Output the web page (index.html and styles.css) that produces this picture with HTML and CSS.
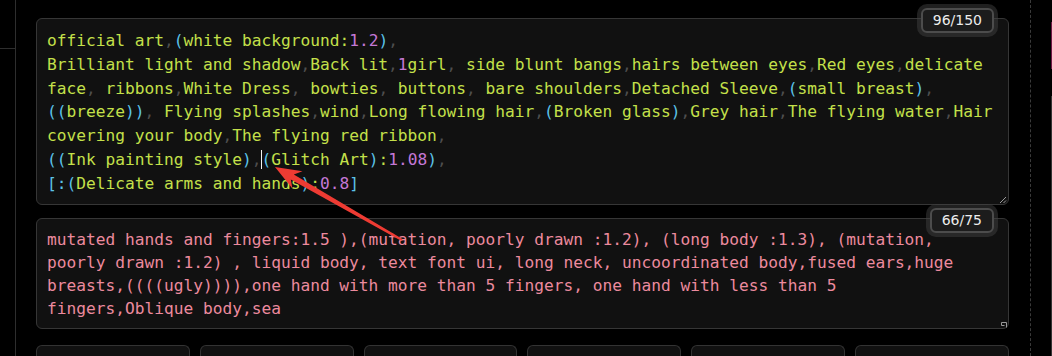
FILE: index.html
```html
<!DOCTYPE html>
<html lang="en">
<head>
  <meta charset="UTF-8">
  <title>Prompt editor</title>
  <link rel="stylesheet" href="styles.css">
</head>
<body>

  <div class="side"><div class="side-head"></div></div>

  <div class="main">
    <div class="editor pos">
      <span class="count">96/150</span>
      <div class="prompt">official art<span class="c">,</span><span class="p">(</span>white background:<span class="n">1.2</span><span class="p">)</span><span class="c">,</span>
Brilliant light and shadow<span class="c">,</span>Back lit<span class="c">,</span><span class="n">1</span>girl<span class="c">,</span> side blunt bangs<span class="c">,</span>hairs between eyes<span class="c">,</span>Red eyes<span class="c">,</span>delicate face<span class="c">,</span> ribbons<span class="c">,</span>White Dress<span class="c">,</span> bowties<span class="c">,</span> buttons<span class="c">,</span> bare shoulders<span class="c">,</span>Detached Sleeve<span class="c">,</span><span class="p">(</span>small breast<span class="p">)</span><span class="c">,</span>
<span class="p">((</span>breeze<span class="p">))</span><span class="c">,</span> Flying splashes<span class="c">,</span>wind<span class="c">,</span>Long flowing hair<span class="c">,</span><span class="p">(</span>Broken glass<span class="p">)</span><span class="c">,</span>Grey hair<span class="c">,</span>The flying water<span class="c">,</span>Hair covering your body<span class="c">,</span>The flying red ribbon<span class="c">,</span>
<span class="p">((</span>Ink painting style<span class="p">)</span><span class="c">,</span><span class="caret"></span><span class="p">(</span>Glitch Art<span class="p">)</span>:<span class="n">1.08</span><span class="p">)</span><span class="c">,</span>
<span class="p">[:(</span>Delicate arms and hands<span class="p">)</span>:<span class="n">0.8</span><span class="p">]</span></div>
      <svg class="grip" width="8" height="8" viewBox="0 0 8 8">
        <path d="M1 7 L7 1 M4.5 7 L7 4.5" stroke="#9a9a9a" stroke-width="1" fill="none"/>
      </svg>
    </div>

    <div class="editor neg">
      <span class="count">66/75</span>
      <div class="prompt">mutated hands and fingers:1.5 ),(mutation, poorly drawn :1.2), (long body :1.3), (mutation, poorly drawn :1.2) , liquid body, text font ui, long neck, uncoordinated body,fused ears,huge breasts,((((ugly)))),one hand with more than 5 fingers, one hand with less than 5 fingers,Oblique body,sea</div>
      <svg class="grip" width="6" height="6" viewBox="0 0 6 6">
        <path d="M0.5 0.5 H5.5 V5.5 M0.5 0.5 V3.5 H3.5" stroke="#9a9a9a" stroke-width="1" fill="none"/>
      </svg>
    </div>

    <div class="cards">
      <div class="card"></div>
      <div class="card"></div>
      <div class="card"></div>
      <div class="card"></div>
      <div class="card"></div>
      <div class="card"></div>
    </div>
  </div>

  <div class="rail"></div>
  <div class="edge"><div class="edge-mark"></div><div class="edge-line"></div></div>

  <!-- red annotation arrow drawn over the page -->
  <svg class="arrow" width="1052" height="356" viewBox="0 0 1052 356">
    <polygon fill="#ee3b33" points="275,167 302.5,171.3 293.8,174.4 402.5,239.1 401.5,240.9 290.8,179.6 292.5,188.7"/>
  </svg>

</body>
</html>
```

FILE: styles.css
```css
html, body { height: 356px; overflow: hidden; }
body { margin: 0; background: #000; display: flex; font-family: "DejaVu Sans", sans-serif; color: #ddd; }

.side { width: 15px; border-right: 1px solid #2e2e2e; flex: none; }
.side-head { height: 48px; border-bottom: 1px solid #2e2e2e; }

.main { width: 973px; height: 338px; flex: none; padding: 18px 21px 0 20px; border-right: 1px dashed #3a3a3a; }
.rail { width: 20px; flex: none; }
.edge { width: 1px; flex: none; }
.edge-mark { margin-top: 22px; height: 47px; background: #6e1a45; }
.edge-line { margin-top: 27px; height: 260px; background: #353535; }

.editor { position: relative; background: #111; border: 1px solid #363636; border-radius: 6px; }
.editor.pos { height: 185px; }
.editor.neg { height: 109px; margin-top: 13px; }

.prompt { font-family: "DejaVu Sans Mono", monospace; font-size: 16.2px; white-space: pre-wrap; overflow-wrap: break-word; }
.pos .prompt { padding: 10px 6px 0 10px; line-height: 23.75px; color: #c4e04a; }
.neg .prompt { padding: 9px 36px 0 10px; line-height: 23px; color: #ec8a9e; }

.p { color: #5cc3e8; }
.n { color: #c478d6; }
.c { color: #4e4e4e; }
.caret { display: inline-block; width: 0; height: 19px; border-left: 1px solid #f2f2f2; margin-right: -1px; vertical-align: -4px; }

.count { position: absolute; top: -11px; right: 14px; height: 21px; line-height: 21px; padding: 0 10px; font-size: 14px; color: #ececec; background: #1c1c1c; border: 2px solid #4c4c4c; border-radius: 6px; box-shadow: 0 0 0 4px rgba(64, 64, 64, 0.5); }

.grip { position: absolute; right: 1px; bottom: 0; }

.cards { display: grid; grid-template-columns: repeat(6, 1fr); gap: 10px; margin-top: 16px; }
.card { height: 11px; background: #111; border: 1px solid #333; border-bottom: none; border-radius: 6px 6px 0 0; }

.arrow { position: absolute; left: 0; top: 0; pointer-events: none; }
```
